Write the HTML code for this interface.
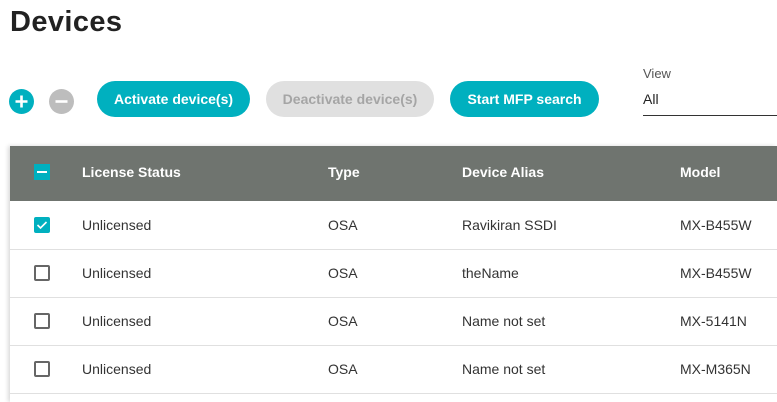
<!DOCTYPE html>
<html><head><meta charset="utf-8"><style>
*{margin:0;padding:0;box-sizing:border-box}
body{width:777px;height:402px;overflow:hidden;background:#fff;font-family:"Liberation Sans",sans-serif;color:#212121;position:relative}
.t{position:absolute;left:10px;top:6px;font-size:29px;font-weight:bold;color:#222;letter-spacing:0.4px}
.circ{position:absolute;top:89px;width:25px;height:25px;border-radius:50%}
.btn{position:absolute;top:81px;height:36px;border-radius:18px;font-size:14px;font-weight:bold;color:#fff;background:#00b0bf;text-align:center;line-height:36px}
.lbl{position:absolute;left:643px;top:66px;font-size:13px;color:#555}
.sel{position:absolute;left:643px;top:91px;font-size:14px;color:#222}
.line{position:absolute;left:643px;top:115px;width:134px;height:1px;background:#333}
.tbl{position:absolute;left:10px;top:146px;width:767px;height:256px;box-shadow:-2px 0 4px rgba(0,0,0,.15)}
.hd{position:absolute;left:0;top:0;width:100%;height:55px;background:#6f746f;color:#fff;font-size:14px;font-weight:bold}
.c{position:absolute;top:0;line-height:53px}
.row{position:absolute;left:0;width:100%;height:48px;border-bottom:1px solid #e0e0e0;font-size:14px;color:#333}
.row .c{line-height:46px}
.cb{position:absolute;left:24px;width:16px;height:16px;border:2px solid #666;border-radius:2px}
</style></head><body>
<div class="t">Devices</div>
<div class="circ" style="left:9px;background:#00b0bf"><svg width="25" height="25"><path d="M12.5 6.5v12M6.5 12.5h12" stroke="#fff" stroke-width="2.6"/></svg></div>
<div class="circ" style="left:49px;background:#bdbdbd"><svg width="25" height="25"><path d="M6.5 12.5h12" stroke="#fff" stroke-width="2.6"/></svg></div>
<div class="btn" style="left:97px;width:153px">Activate device(s)</div>
<div class="btn" style="left:266px;width:168px;background:#e0e0e0;color:#a5a5a5">Deactivate device(s)</div>
<div class="btn" style="left:450px;width:149px">Start MFP search</div>
<div class="lbl">View</div>
<div class="sel">All</div>
<div class="line"></div>
<div class="tbl">
<div class="hd">
<div style="position:absolute;left:24px;top:18px;width:16px;height:16px;background:#00b0bf"><div style="position:absolute;left:3px;top:7px;width:10px;height:2px;background:#fff"></div></div>
<div class="c" style="left:72px">License Status</div>
<div class="c" style="left:318px">Type</div>
<div class="c" style="left:452px">Device Alias</div>
<div class="c" style="left:670px">Model</div>
</div>
<div class="row" style="top:56px"><div style="position:absolute;left:24px;top:15px;width:16px;height:16px;background:#00b0bf;border-radius:2px"><svg width="16" height="16"><path d="M3.5 8l3 3 6-6" stroke="#fff" stroke-width="1.6" fill="none"/></svg></div><div class="c" style="left:72px">Unlicensed</div><div class="c" style="left:318px">OSA</div><div class="c" style="left:452px">Ravikiran SSDI</div><div class="c" style="left:670px">MX-B455W</div></div>
<div class="row" style="top:104px"><div class="cb" style="top:15px"></div><div class="c" style="left:72px">Unlicensed</div><div class="c" style="left:318px">OSA</div><div class="c" style="left:452px">theName</div><div class="c" style="left:670px">MX-B455W</div></div>
<div class="row" style="top:152px"><div class="cb" style="top:15px"></div><div class="c" style="left:72px">Unlicensed</div><div class="c" style="left:318px">OSA</div><div class="c" style="left:452px">Name not set</div><div class="c" style="left:670px">MX-5141N</div></div>
<div class="row" style="top:200px"><div class="cb" style="top:15px"></div><div class="c" style="left:72px">Unlicensed</div><div class="c" style="left:318px">OSA</div><div class="c" style="left:452px">Name not set</div><div class="c" style="left:670px">MX-M365N</div></div>
</div>
</body></html>
